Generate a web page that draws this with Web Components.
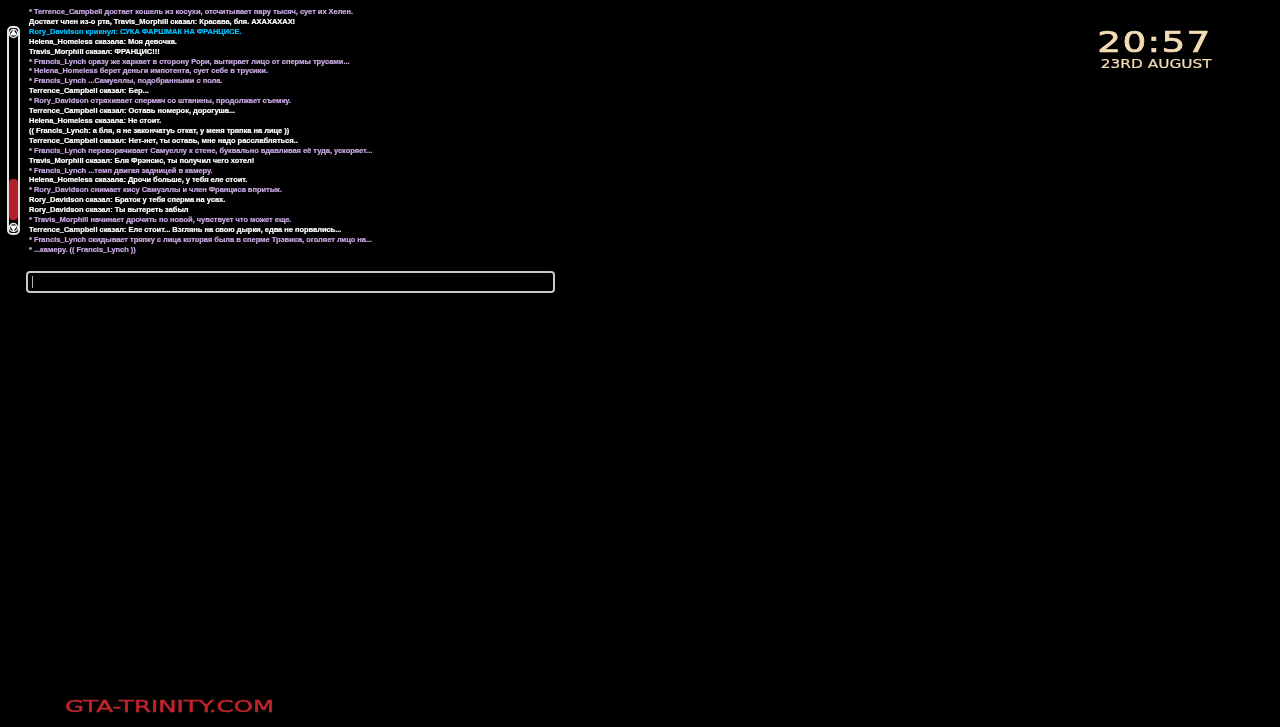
<!DOCTYPE html>
<html lang="ru">
<head>
<meta charset="utf-8">
<title>GTA Trinity</title>
<style>
  html, body { margin: 0; height: 100%; background: #000; }
</style>
</head>
<body>
<game-screen>
  <chat-panel slot="left">
    <chat-line kind="me">* Terrence_Campbell достает кошель из косухи, отсчитывает пару тысяч, сует их Хелен.</chat-line>
    <chat-line>Достает член из-о рта, Travis_Morphill сказал: Красава, бля. АХАХАХАХ!</chat-line>
    <chat-line kind="shout">Rory_Davidson крикнул: СУКА ФАРШМАК НА ФРАНЦИСЕ.</chat-line>
    <chat-line>Helena_Homeless сказала: Моя девочка.</chat-line>
    <chat-line>Travis_Morphill сказал: ФРАНЦИС!!!</chat-line>
    <chat-line kind="me">* Francis_Lynch сразу же харкает в сторону Рори, вытирает лицо от спермы трусами...</chat-line>
    <chat-line kind="me">* Helena_Homeless берет деньги импотента, сует себе в трусики.</chat-line>
    <chat-line kind="me">* Francis_Lynch ...Самуеллы, подобранными с пола.</chat-line>
    <chat-line>Terrence_Campbell сказал: Бер...</chat-line>
    <chat-line kind="me">* Rory_Davidson отряхивает спермач со штанины, продолжает съемку.</chat-line>
    <chat-line>Terrence_Campbell сказал: Оставь номерок, дорогуша...</chat-line>
    <chat-line>Helena_Homeless сказала: Не стоит.</chat-line>
    <chat-line>(( Francis_Lynch: а бля, я не закончатуь откат, у меня тряпка на лице ))</chat-line>
    <chat-line>Terrence_Campbell сказал: Нет-нет, ты оставь, мне надо расслабляться..</chat-line>
    <chat-line kind="me">* Francis_Lynch переворачивает Самуеллу к стене, буквально вдавливая её туда, ускоряет...</chat-line>
    <chat-line>Travis_Morphill сказал: Бля Фрэнсис, ты получил чего хотел!</chat-line>
    <chat-line kind="me">* Francis_Lynch ...темп двигая задницей в камеру.</chat-line>
    <chat-line>Helena_Homeless сказала: Дрочи больше, у тебя еле стоит.</chat-line>
    <chat-line kind="me">* Rory_Davidson снимает кису Самуэллы и член Франциса впритык.</chat-line>
    <chat-line>Rory_Davidson сказал: Браток у тебя сперма на усах.</chat-line>
    <chat-line>Rory_Davidson сказал: Ты вытереть забыл</chat-line>
    <chat-line kind="me">* Travis_Morphill начинает дрочить по новой, чувствует что может еще.</chat-line>
    <chat-line>Terrence_Campbell сказал: Еле стоит... Взглянь на свою дырки, едва не порвались...</chat-line>
    <chat-line kind="me">* Francis_Lynch скидывает тряпку с лица которая была в сперме Трэвиса, оголяет лицо на...</chat-line>
    <chat-line kind="me">* ...камеру. (( Francis_Lynch ))</chat-line>
  </chat-panel>
  <hud-clock slot="right" time="20:57" date="23RD AUGUST"></hud-clock>
  <server-logo slot="bottom">GTA-TRINITY.COM</server-logo>
</game-screen>

<script>
const screenTpl = document.createElement("template");
screenTpl.innerHTML = `
  <style>
    :host {
      display: grid;
      grid-template-columns: 1fr auto;
      grid-template-rows: 1fr auto;
      height: 727px;
      overflow: hidden;
      background: #000;
    }
    .bottom { grid-column: 1 / 3; padding: 0 0 12px 65px; }
    .right { padding: 27px 68px 0 0; }
  </style>
  <div><slot name="left"></slot></div>
  <div class="right"><slot name="right"></slot></div>
  <div class="bottom"><slot name="bottom"></slot></div>
`;

class GameScreen extends HTMLElement {
  constructor() {
    super();
    this.attachShadow({ mode: "open" });
    this.shadowRoot.appendChild(screenTpl.content.cloneNode(true));
  }
}

const panelTpl = document.createElement("template");
panelTpl.innerHTML = `
  <style>
    :host {
      display: grid;
      grid-template-columns: 13px 1fr;
      column-gap: 9px;
      padding: 7px 0 0 7px;
      width: 560px;
      box-sizing: border-box;
    }
    /* the game's chat is soft, it was upscaled */
    .log { grid-column: 2; grid-row: 1; filter: blur(0.25px); }
    chat-scroll { grid-column: 1; grid-row: 1; margin-top: 19px; }
    chat-input { grid-column: 1 / 3; margin: 16px 0 0 19px; }
  </style>
  <chat-scroll></chat-scroll>
  <div class="log"><slot></slot></div>
  <chat-input></chat-input>
`;

class ChatPanel extends HTMLElement {
  constructor() {
    super();
    this.attachShadow({ mode: "open" });
    this.shadowRoot.appendChild(panelTpl.content.cloneNode(true));
  }
}

const lineTpl = document.createElement("template");
lineTpl.innerHTML = `
  <style>
    :host {
      display: block;
      height: 9.92px;
      font: bold 7.5px/10px "Liberation Sans", Arial, sans-serif;
      color: #fff;
      white-space: nowrap;
      letter-spacing: -0.035px;
      -webkit-text-stroke: 0.2px currentColor;
    }
    :host([kind="me"]) { color: #c8a8e2; }
    :host([kind="shout"]) { color: #00c0ff; }
  </style>
  <slot></slot>
`;

class ChatLine extends HTMLElement {
  constructor() {
    super();
    this.attachShadow({ mode: "open" });
    this.shadowRoot.appendChild(lineTpl.content.cloneNode(true));
  }
}

const scrollTpl = document.createElement("template");
scrollTpl.innerHTML = `
  <style>
    :host {
      display: flex;
      flex-direction: column;
      width: 13px;
      height: 209px;
      box-sizing: border-box;
      border: 2px solid #e4e4e4;
      border-radius: 5px;
      background: #000;
    }
    svg { display: block; flex: none; }
    .track {
      flex: 1;
      display: flex;
      flex-direction: column;
      justify-content: flex-end;
      align-items: center;
    }
    .thumb {
      width: 9px;
      height: 41px;
      margin-bottom: 2px;
      border-radius: 4px;
      background: #b3202a;
    }
  </style>
  <svg width="9" height="11" viewBox="0 0 9 11">
    <circle cx="4.5" cy="5.5" r="4" fill="none" stroke="#e4e4e4" stroke-width="1.4"/>
    <path d="M0.8 7.5 4.5 1.5 8.2 7.5Z" fill="#fff"/>
  </svg>
  <div class="track"><div class="thumb"></div></div>
  <svg width="9" height="11" viewBox="0 0 9 11">
    <circle cx="4.5" cy="5.5" r="4" fill="none" stroke="#e4e4e4" stroke-width="1.4"/>
    <path d="M0.8 3.5 4.5 9.5 8.2 3.5Z" fill="#fff"/>
  </svg>
`;

class ChatScroll extends HTMLElement {
  constructor() {
    super();
    this.attachShadow({ mode: "open" });
    this.shadowRoot.appendChild(scrollTpl.content.cloneNode(true));
  }
}

const inputTpl = document.createElement("template");
inputTpl.innerHTML = `
  <style>
    :host {
      display: flex;
      align-items: center;
      width: 529px;
      height: 22px;
      box-sizing: border-box;
      padding-left: 4px;
      border: 2px solid #c8c8c8;
      border-radius: 4px;
      background: #000;
    }
    .caret { width: 1px; height: 12px; background: #b0b0b0; }
  </style>
  <div class="caret"></div>
`;

class ChatInput extends HTMLElement {
  constructor() {
    super();
    this.attachShadow({ mode: "open" });
    this.shadowRoot.appendChild(inputTpl.content.cloneNode(true));
  }
}

const clockTpl = document.createElement("template");
clockTpl.innerHTML = `
  <style>
    :host {
      display: flex;
      flex-direction: column;
      align-items: flex-end;
      width: 114px;
      color: #f3dcb4;
      font-family: "DejaVu Sans", sans-serif;
      white-space: nowrap;
    }
    span { display: block; transform-origin: right top; }
    .time {
      font-size: 29px;
      line-height: 30px;
      letter-spacing: 1px;
      -webkit-text-stroke: 0.7px currentColor;
      transform: scaleX(1.29);
    }
    .date {
      font-size: 12px;
      line-height: 14px;
      -webkit-text-stroke: 0.2px currentColor;
      transform: scaleX(1.28);
    }
  </style>
  <span class="time"></span>
  <span class="date"></span>
`;

class HudClock extends HTMLElement {
  constructor() {
    super();
    this.attachShadow({ mode: "open" });
    this.shadowRoot.appendChild(clockTpl.content.cloneNode(true));
  }

  connectedCallback() {
    this.shadowRoot.querySelector(".time").textContent = this.getAttribute("time");
    this.shadowRoot.querySelector(".date").textContent = this.getAttribute("date");
  }
}

const logoTpl = document.createElement("template");
logoTpl.innerHTML = `
  <style>
    :host {
      display: block;
      color: #c0242b;
      font: 15px/16px "DejaVu Sans", sans-serif;
      -webkit-text-stroke: 0.4px currentColor;
      white-space: nowrap;
    }
    span { display: inline-block; transform-origin: left top; transform: scaleX(1.634); }
  </style>
  <span><slot></slot></span>
`;

class ServerLogo extends HTMLElement {
  constructor() {
    super();
    this.attachShadow({ mode: "open" });
    this.shadowRoot.appendChild(logoTpl.content.cloneNode(true));
  }
}

customElements.define("chat-line", ChatLine);
customElements.define("chat-scroll", ChatScroll);
customElements.define("chat-input", ChatInput);
customElements.define("chat-panel", ChatPanel);
customElements.define("hud-clock", HudClock);
customElements.define("server-logo", ServerLogo);
customElements.define("game-screen", GameScreen);
</script>
</body>
</html>
